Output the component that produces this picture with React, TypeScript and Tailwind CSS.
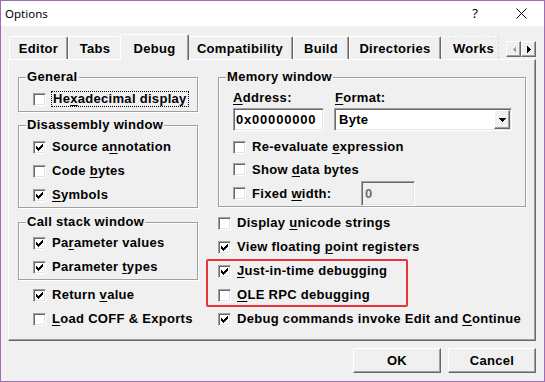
import React from "react";

// classic 7x7 check glyph, pixel by pixel
const CHECK_PIXELS: [number, number][] = [
  [6, 0], [5, 1], [6, 1], [0, 2], [4, 2], [5, 2], [6, 2],
  [0, 3], [1, 3], [3, 3], [4, 3], [5, 3],
  [0, 4], [1, 4], [2, 4], [3, 4], [4, 4],
  [1, 5], [2, 5], [3, 5], [2, 6],
];

function CheckBox({ checked }: { checked?: boolean }) {
  return (
    <span className="flex items-center justify-center w-[13px] h-[13px] shrink-0 bg-white border border-t-[#a0a0a0] border-l-[#a0a0a0] border-b-white border-r-white shadow-[inset_1px_1px_0_#696969,inset_-1px_-1px_0_#e3e3e3]">
      {checked && (
        <svg width="7" height="7" viewBox="0 0 7 7" shapeRendering="crispEdges">
          {CHECK_PIXELS.map(([x, y]) => (
            <rect key={`${x}-${y}`} x={x} y={y} width="1" height="1" fill="#000" />
          ))}
        </svg>
      )}
    </span>
  );
}

function U({ children }: { children: React.ReactNode }) {
  return <span className="underline underline-offset-2 decoration-1">{children}</span>;
}

function Row({
  checked,
  children,
  className = "",
  labelClass = "",
}: {
  checked?: boolean;
  children: React.ReactNode;
  className?: string;
  labelClass?: string;
}) {
  return (
    <div className={`flex items-center gap-[6px] ${className}`}>
      <CheckBox checked={checked} />
      <span className={`leading-4 whitespace-nowrap ${labelClass}`}>{children}</span>
    </div>
  );
}

function Group({
  title,
  className = "",
  children,
}: {
  title: string;
  className?: string;
  children: React.ReactNode;
}) {
  return (
    <fieldset className={`min-w-0 border border-[#a0a0a0] shadow-[inset_1px_1px_0_#fff,1px_1px_0_#fff] ${className}`}>
      <legend className="ml-[7px] px-[1px] leading-4 bg-[#f0f0f0]">{title}</legend>
      {children}
    </fieldset>
  );
}

const tabs = [
  { name: "Editor", w: "w-[59px]" },
  { name: "Tabs", w: "w-[54px]" },
  { name: "Debug", w: "w-[69px]", active: true },
  { name: "Compatibility", w: "w-[106px]" },
  { name: "Build", w: "w-[56px]" },
  { name: "Directories", w: "w-[92px]" },
];

function Sunken({ className = "", children }: { className?: string; children?: React.ReactNode }) {
  return (
    <div className={`border border-t-[#a0a0a0] border-l-[#a0a0a0] border-b-white border-r-white shadow-[inset_1px_1px_0_#696969,inset_-1px_-1px_0_#e3e3e3] ${className}`}>
      {children}
    </div>
  );
}

function Raised({ className = "", children }: { className?: string; children?: React.ReactNode }) {
  return (
    <div className={`border border-t-white border-l-white border-r-[#696969] border-b-[#696969] shadow-[inset_-1px_-1px_0_#a0a0a0] ${className}`}>
      {children}
    </div>
  );
}

function Button({ children }: { children: React.ReactNode }) {
  return (
    <button className="w-[88px] h-[25px] bg-[#f0f0f0] border border-t-white border-l-white border-r-[#696969] border-b-[#696969] shadow-[inset_-1px_-1px_0_#a0a0a0] leading-4">
      {children}
    </button>
  );
}

export default function App() {
  return (
    <div className="w-[545px] h-[382px] border border-[#a06cb4] bg-[#f0f0f0] flex flex-col text-black font-['Liberation_Sans',Arial,sans-serif] font-bold text-[13px] tracking-[0.3px] overflow-hidden">
      {/* Title bar */}
      <div className="h-[25px] bg-white flex items-center shrink-0 tracking-normal">
        <span className="pl-[4px] font-['Noto_Sans',sans-serif] font-normal text-[11.5px]">Options</span>
        <div className="ml-auto flex h-full">
          <div className="w-[46px] flex items-center justify-center font-['Noto_Sans',sans-serif] font-normal text-[13px]">?</div>
          <div className="w-[46px] flex items-center justify-center">
            <svg width="11" height="11" viewBox="0 0 11 11">
              <path d="M0.5 0.5 L10.5 10.5 M10.5 0.5 L0.5 10.5" stroke="#000" strokeWidth="1" fill="none" />
            </svg>
          </div>
        </div>
      </div>

      {/* Tab strip */}
      <div className="relative z-10 flex items-end h-[26px] mt-[8px] ml-[8px] w-[528px]">
        <div className="flex items-end w-[490px] h-full">
          {tabs.map((t) =>
            t.active ? (
              <div
                key={t.name}
                className={`${t.w} shrink-0 -mx-[2px] relative z-10 h-[26px] pt-[6px] text-center leading-4 bg-[#f0f0f0] border-l border-t border-r border-l-white border-t-white border-r-[#696969] rounded-t-[2px] shadow-[inset_-1px_0_0_#a0a0a0]`}
              >
                {t.name}
              </div>
            ) : (
              <div
                key={t.name}
                className={`${t.w} shrink-0 h-[23px] mb-[1px] pt-[4px] text-center leading-4 whitespace-nowrap border-l border-t border-r border-l-white border-t-white border-r-[#696969] rounded-t-[2px] shadow-[inset_-1px_0_0_#a0a0a0]`}
              >
                {t.name}
              </div>
            )
          )}
          {/* partially scrolled-off tab */}
          <div className="w-[58px] shrink-0 h-[23px] mb-[1px] pt-[4px] pl-[11px] leading-4 whitespace-nowrap border-l border-t border-r border-l-white border-t-white border-r-[#d8d8d8] border-dashed rounded-tl-[2px]">
            Works
          </div>
        </div>
        <div className="ml-[7px] mb-[3px] flex">
          <Raised className="w-[15px] h-[16px] flex items-center justify-center">
            <svg width="4" height="7" viewBox="0 0 4 7" shapeRendering="crispEdges">
              <path d="M4 0 L4 7 L0.5 3.5 Z" fill="#a0a0a0" />
            </svg>
          </Raised>
          <Raised className="w-[15px] h-[16px] flex items-center justify-center">
            <svg width="4" height="7" viewBox="0 0 4 7" shapeRendering="crispEdges">
              <path d="M0 0 L0 7 L3.5 3.5 Z" fill="#000" />
            </svg>
          </Raised>
        </div>
      </div>

      {/* Tab panel */}
      <div className="-mt-[1px] ml-[7px] w-[528px] h-[282px] shrink-0 border border-t-white border-l-white border-r-[#696969] border-b-[#696969] shadow-[inset_-1px_-1px_0_#a0a0a0] flex">
        {/* Left column */}
        <div className="ml-[9px] w-[180px] flex flex-col">
          <Group title="General" className="mt-[9px]">
            <div className="pl-[14px] pt-[2px]">
              <Row className="h-6" labelClass="border border-dotted border-black -ml-[1px] px-[1px] leading-[14px]">
                He<U>x</U>adecimal display
              </Row>
            </div>
          </Group>
          <Group title="Disassembly window" className="mt-[5px]">
            <div className="pl-[14px] pt-[2px]">
              <Row checked className="h-6">Source a<U>n</U>notation</Row>
              <Row className="h-6">Code <U>b</U>ytes</Row>
              <Row checked className="h-6"><U>S</U>ymbols</Row>
            </div>
          </Group>
          <Group title="Call stack window" className="mt-[6px]">
            <div className="pl-[14px] pt-[1px]">
              <Row checked className="h-6">Pa<U>r</U>ameter values</Row>
              <Row checked className="h-6">Parameter <U>t</U>ypes</Row>
            </div>
          </Group>
          <div className="pl-[15px] mt-[3px]">
            <Row checked className="h-6">Return <U>v</U>alue</Row>
            <Row className="h-6"><U>L</U>oad COFF &amp; Exports</Row>
          </div>
        </div>

        {/* Right column */}
        <div className="ml-[8px] w-[321px] flex flex-col">
          <Group title="Memory window" className="mt-[9px] ml-[12px] w-[308px]">
            <div className="pl-[14px] pt-[5px]">
              <div className="flex leading-4">
                <span className="w-[102px]"><U>A</U>ddress:</span>
                <span><U>F</U>ormat:</span>
              </div>
              <div className="flex gap-[10px] mt-[2px]">
                <Sunken className="w-[91px] h-[23px] bg-white flex items-center pl-[2px] tracking-[0.8px]">
                  0x00000000
                </Sunken>
                <Sunken className="w-[178px] h-[23px] bg-white flex items-center">
                  <span className="pl-[4px]">Byte</span>
                  <Raised className="ml-auto mr-[1px] w-[16px] h-[19px] bg-[#f0f0f0] flex items-center justify-center">
                    <svg width="7" height="4" viewBox="0 0 7 4" shapeRendering="crispEdges">
                      <path d="M0 0 L7 0 L3.5 4 Z" fill="#000" />
                    </svg>
                  </Raised>
                </Sunken>
              </div>
              <Row className="h-[22px] mt-[5px]">Re-evaluate <U>e</U>xpression</Row>
              <Row className="h-[23px]">Show <U>d</U>ata bytes</Row>
              <div className="flex items-center h-[25px]">
                <Row labelClass="w-[109px]">
                  Fixed <U>w</U>idth:
                </Row>
                <Sunken className="w-[54px] h-[25px] bg-[#f0f0f0] flex items-center pl-[3px] text-[#6d6d6d]">
                  0
                </Sunken>
              </div>
            </div>
          </Group>
          <div className="mt-[4px]">
            <Row className="h-6 pl-[12px]">Display <U>u</U>nicode strings</Row>
            <Row checked className="h-6 pl-[12px]">View floating <U>p</U>oint registers</Row>
            <div className="w-[202px] outline-2 outline-[#e8333b] outline-offset-[-2px] rounded-[2px]">
              <Row checked className="h-6 pl-[12px]"><U>J</U>ust-in-time debugging</Row>
              <Row className="h-6 pl-[12px]"><U>O</U>LE RPC debugging</Row>
            </div>
            <Row checked className="h-6 pl-[12px]">Debug commands invoke Edit and <U>C</U>ontinue</Row>
          </div>
        </div>
      </div>

      {/* Buttons */}
      <div className="flex justify-end gap-[7px] mt-[7px] w-[535px]">
        <Button>OK</Button>
        <Button>Cancel</Button>
      </div>
    </div>
  );
}
